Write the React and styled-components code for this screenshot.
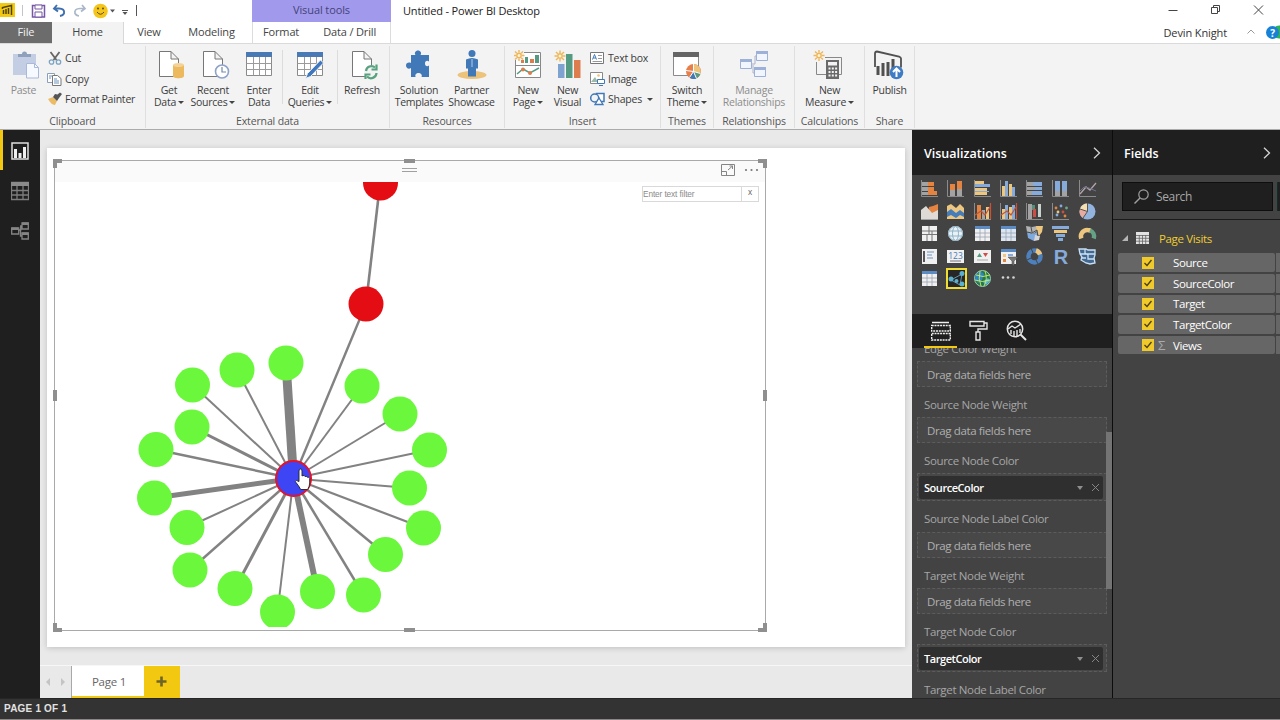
import React, { useState } from "react";
import styled, { createGlobalStyle, css } from "styled-components";

const GlobalStyle = createGlobalStyle`
  * {
    box-sizing: border-box;
  }
  body {
    margin: 0;
    overflow: hidden;
    font-family: "Open Sans", "Noto Sans", sans-serif;
    font-size: 11px;
    color: #444;
  }
  svg {
    display: block;
    flex-shrink: 0;
  }
`;

const Window = styled.div`
  width: 1280px;
  height: 720px;
  display: flex;
  flex-direction: column;
  background: #fff;
`;

/* ---------- title bar + tabs ---------- */

const TopBar = styled.header`
  height: 43px;
  display: flex;
  background: #fff;
`;

const TopLeft = styled.div`
  width: 252px;
  display: flex;
  flex-direction: column;
`;

const QuickAccess = styled.div`
  height: 22px;
  display: flex;
  align-items: center;
`;

const Tabs = styled.nav`
  height: 21px;
  display: flex;
`;

const Tab = styled.div`
  width: ${(props) => props.$width}px;
  height: ${(props) => (props.$active ? 22 : 21)}px;
  line-height: 20px;
  text-align: center;
  font-size: 11px;
  letter-spacing: -0.15px;
  color: #444;
  ${(props) =>
    props.$file &&
    css`
      background: #6c6c6c;
      color: #f2f2f2;
    `}
  ${(props) =>
    props.$active &&
    css`
      background: #f3f3f3;
      border-right: 1px solid #d8d8d8;
      z-index: 1;
    `}
`;

const ToolTabs = styled.div`
  width: 139px;
  border-right: 1px solid #dcdcdc;
  border-left: 1px solid #dcdcdc;
`;

const ToolTitle = styled.div`
  height: 22px;
  margin: 0 -1px;
  background: #a19aec;
  text-align: center;
  line-height: 19px;
  color: #45427a;
  letter-spacing: -0.1px;
`;

const TitleArea = styled.div`
  flex: 1;
  display: flex;
  flex-direction: column;
`;

const TitleRow = styled.div`
  height: 22px;
  display: flex;
  justify-content: space-between;
  padding-left: 12px;
  line-height: 22px;
  color: #222;
  letter-spacing: -0.16px;
`;

const AccountRow = styled.div`
  height: 21px;
  display: flex;
  justify-content: flex-end;
  align-items: center;
  padding-bottom: 1px;
  color: #333;
  letter-spacing: -0.12px;
`;

/* ---------- ribbon ---------- */

const Ribbon = styled.div`
  height: 87px;
  display: flex;
  background: #f3f3f3;
  border-top: 1px solid #dadada;
  border-bottom: 1px solid #ababab;
`;

const Group = styled.section`
  width: ${(props) => props.$width}px;
  height: 82px;
  margin-top: 2px;
  display: flex;
  flex-direction: column;
  border-right: 1px solid #dfdfdf;
`;

const GroupBody = styled.div`
  height: 67px;
  display: flex;
  padding-left: ${(props) => props.$pad || 0}px;
  justify-content: ${(props) => (props.$center ? "center" : "flex-start")};
`;

const GroupLabel = styled.div`
  height: 15px;
  line-height: 17px;
  text-align: center;
  font-size: 10.5px;
  letter-spacing: -0.15px;
  color: #555;
  white-space: nowrap;
`;

const BigButton = styled.div`
  width: ${(props) => props.$width}px;
  flex-shrink: 0;
  display: flex;
  flex-direction: column;
  align-items: center;
  padding-top: 4px;
  color: ${(props) => (props.$disabled ? "#8c8c8c" : "#3c3c3c")};
`;

const ButtonText = styled.div`
  margin-top: 4px;
  font-size: 10.5px;
  line-height: 12px;
  letter-spacing: -0.25px;
  text-align: center;
  white-space: nowrap;
`;

const Line = styled.div`
  display: flex;
  justify-content: center;
  align-items: center;
`;

const Caret = styled.i`
  margin-left: 2px;
  border: 3px solid transparent;
  border-top: 3px solid #444;
  border-bottom: 0;
`;

const SmallButtons = styled.div`
  display: flex;
  flex-direction: column;
  padding: 2px 0 0 ${(props) => props.$pad || 0}px;
`;

const SmallButton = styled.div`
  height: 20.6px;
  display: flex;
  align-items: center;
  gap: 3px;
  font-size: 10.5px;
  letter-spacing: -0.22px;
  color: #3c3c3c;
  white-space: nowrap;
`;

const SmallIcon = styled.span`
  width: 15px;
  display: flex;
  justify-content: center;
`;

const InnerRule = styled.div`
  width: 1px;
  height: 54px;
  margin-top: 4px;
  background: #dcdcdc;
`;

/* ---------- body ---------- */

const Body = styled.div`
  height: 568px;
  display: flex;
`;

const ViewRail = styled.aside`
  width: 40px;
  background: #1f1f1f;
  display: flex;
  flex-direction: column;
`;

const RailItem = styled.div`
  height: 40px;
  display: flex;
  align-items: center;
  padding-top: 2px;
  padding-left: ${(props) => (props.$active ? 8 : 11)}px;
  border-left: ${(props) => (props.$active ? "3px solid #f2c811" : "0")};
`;

const Workspace = styled.main`
  width: 872px;
  background: #e9e9e9;
  display: flex;
  flex-direction: column;
`;

const CanvasWrap = styled.div`
  height: 535px;
  padding: 18px 7px 0;
`;

const Page = styled.div`
  height: 499px;
  background: #fff;
  padding: 12px 0 0 7px;
  box-shadow: 0 1px 6px rgba(0, 0, 0, 0.18);
`;

const VisualFrame = styled.div`
  position: relative;
  width: 712px;
  height: 471px;
  border: 1px solid #a9a9a9;
`;

const VisualHeader = styled.div`
  height: 21px;
  background: #fafafa;
  display: flex;
  align-items: center;
  justify-content: flex-end;
  gap: 9px;
  padding: 0 5px 3px 0;
`;

const Grip = styled.div`
  width: 15px;
  height: 4px;
  margin-right: 295px;
  border-top: 1px solid #a0a0a0;
  border-bottom: 1px solid #a0a0a0;
`;

const Handle = styled.span`
  position: absolute;
  ${(props) => props.$v}: -2px;
  ${(props) => props.$h}: -2px;
  width: 9px;
  height: 9px;
  border: 0 solid #8f8f8f;
  border-${(props) => props.$v}-width: 4px;
  border-${(props) => props.$h}-width: 4px;
`;

const EdgeHandle = styled.span`
  position: absolute;
  background: #8f8f8f;
  ${(props) =>
    props.$v
      ? css`
          ${props.$v}: -2px;
          left: 349px;
          width: 11px;
          height: 4px;
        `
      : css`
          ${props.$h}: -2px;
          top: 229px;
          width: 4px;
          height: 11px;
        `}
`;

const FilterBox = styled.div`
  position: absolute;
  top: 25px;
  left: 587px;
  width: 117px;
  height: 16px;
  display: flex;
  border: 1px solid #d9d9d9;
  background: #fff;
  font: 8.3px/14px "Liberation Sans", Arial, sans-serif;
  color: #8a8a8a;
  letter-spacing: -0.12px;
`;

const FilterText = styled.div`
  flex: 1;
`;

const FilterClear = styled.div`
  width: 17px;
  border-left: 1px solid #d9d9d9;
  text-align: center;
  line-height: 10px;
  color: #666;
`;

const PageTabs = styled.div`
  height: 33px;
  display: flex;
  border-top: 1px solid #f7f7f7;
`;

const PageArrows = styled.div`
  width: 32px;
  display: flex;
  align-items: center;
  justify-content: center;
  gap: 11px;
  border-right: 1px solid #a8a8a8;
`;

const Arrow = styled.i`
  border: 4px solid transparent;
  ${(props) =>
    props.$left
      ? "border-right-color: #c4c4c4; border-left: 0;"
      : "border-left-color: #c4c4c4; border-right: 0;"}
`;

const PageTab = styled.div`
  width: 72px;
  background: #fff;
  border-bottom: 2px solid #f2c811;
  text-align: center;
  line-height: 31px;
  padding-left: 2px;
  font-size: 11.5px;
  letter-spacing: -0.25px;
  color: #666;
`;

const AddPage = styled.div`
  width: 36px;
  background: #f2c811;
  display: flex;
  align-items: center;
  justify-content: center;
  padding: 0 1px 2px 0;
`;

/* ---------- right panes ---------- */

const Pane = styled.aside`
  width: ${(props) => props.$width}px;
  display: flex;
  flex-direction: column;
  background: #434343;
  border-right: ${(props) => (props.$rule ? "1px solid #0c0c0c" : "0")};
  overflow: hidden;
`;

const PaneHeader = styled.div`
  height: 45px;
  flex-shrink: 0;
  display: flex;
  align-items: center;
  justify-content: space-between;
  padding: 1px ${(props) => props.$right}px 0 ${(props) => props.$left}px;
  background: #1f1f1f;
  color: #fff;
  font-size: 12.5px;
  font-weight: 600;
  letter-spacing: 0;
`;

const VisualGrid = styled.div`
  height: 139px;
  flex-shrink: 0;
  padding: 5px 0 0 9px;
  display: grid;
  grid-template-columns: repeat(7, 26.3px);
  grid-auto-rows: 22.5px;
`;

const VisualCell = styled.div`
  display: flex;

  svg {
    overflow: visible;
  }
  ${(props) =>
    props.$selected &&
    css`
      width: 21px;
      height: 21px;
      margin: -2px 0 0 -1px;
      border: 2px solid #f0dc32;
      background: #262626;
    `}
`;

const Modes = styled.div`
  height: 34px;
  flex-shrink: 0;
  display: flex;
  padding-left: 12px;
  background: #1f1f1f;
`;

const Mode = styled.div`
  width: ${(props) => props.$width}px;
  height: 34px;
  display: flex;
  justify-content: center;
  align-items: center;
  padding-top: 1px;
  border-bottom: 2px solid ${(props) => (props.$active ? "#f2c811" : "transparent")};
`;

const Wells = styled.div`
  flex: 1;
  min-height: 0;
  display: flex;
  overflow: hidden;
`;

const WellList = styled.div`
  width: 194px;
  padding-left: 5px;
  margin-top: -17.5px;
`;

const WellLabel = styled.div`
  height: 30.3px;
  padding: 9px 0 0 7px;
  line-height: 18px;
  font-size: 11.5px;
  letter-spacing: -0.35px;
  color: #a6a6a6;
  white-space: nowrap;
`;

const WellBox = styled.div`
  width: 190px;
  height: ${(props) => (props.$filled ? 28 : 26)}px;
  border: 1px dashed #5c5c5c;
  background: #484848;
  padding: ${(props) => (props.$filled ? "2px 1px 1px 1px" : "0 0 0 9px")};
  line-height: 26px;
  font-size: 11.5px;
  letter-spacing: -0.38px;
  color: #b0b0b0;
`;

const WellField = styled.div`
  height: 23px;
  width: 184px;
  display: flex;
  align-items: center;
  padding: 0 3px 0 5px;
  background: #2f2f2f;
  border-radius: 2px;
  color: #fff;
  font-size: 11px;
  font-weight: 600;
  letter-spacing: -0.45px;
`;

const WellCaret = styled.i`
  margin-left: auto;
  margin-right: 8px;
  border: 3.5px solid transparent;
  border-top: 4px solid #8f8f8f;
  border-bottom: 0;
`;

const ScrollThumb = styled.div`
  width: 6px;
  height: 157px;
  margin-top: 84px;
  background: #747474;
`;

const SearchRow = styled.div`
  height: 45px;
  padding: 7px 0 0 9px;
  display: flex;
  gap: 4px;
  border-bottom: 1px solid #1a1a1a;
`;

const SearchBox = styled.div`
  width: 151px;
  height: 29px;
  display: flex;
  align-items: center;
  gap: 7px;
  padding-left: 11px;
  background: #1f1f1f;
  border: 1px solid #0e0e0e;
  color: #a8a8a8;
  font-size: 12px;
  letter-spacing: -0.35px;
`;

const SearchSide = styled.div`
  flex: 1;
  height: 29px;
  background: #1f1f1f;
  border-left: 1px solid #0e2e2e;
`;

const TableRow = styled.div`
  height: 33.4px;
  padding: 3px 0 0 9px;
  display: flex;
  align-items: center;
  color: #f0cd31;
  font-size: 11.5px;
  letter-spacing: -0.35px;
`;

const TableName = styled.span`
  margin-left: 10px;
`;

const Twisty = styled.i`
  margin-right: 8px;
  border-left: 6px solid transparent;
  border-bottom: 6px solid #b5b5b5;
`;

const FieldRow = styled.div`
  height: 18.6px;
  margin: 0 0 2px 5px;
  display: flex;
  gap: 1px;
`;

const FieldMain = styled.div`
  width: 157px;
  display: flex;
  align-items: center;
  padding-left: 24px;
  background: #666;
  border-radius: 2px;
  color: #fff;
  font-size: 11.5px;
  letter-spacing: -0.42px;
`;

const FieldTail = styled.div`
  flex: 1;
  background: #666;
`;

const Check = styled.button`
  width: 12px;
  height: 12px;
  padding: 1px;
  border: 0;
  background: ${(props) => (props.$on ? "#f0c92a" : "#555")};
`;

const Sigma = styled.span`
  width: 19px;
  padding-left: 4px;
  font-size: 13px;
  color: #aaa;
`;

const StatusBar = styled.footer`
  height: 22px;
  padding-left: 4px;
  background: #333;
  border-top: 1px solid #262626;
  border-bottom: 1px solid #8c8686;
  font: bold 10px/19px "Liberation Sans", Arial, sans-serif;
  color: #e2e2e2;
  letter-spacing: 0.2px;
`;

/* ---------- ribbon icons ---------- */

const Doc = () => (
  <path d="M1.500 1.500H13L20.500 9V26.500H1.500zM13 1.500V9h7.500" fill="#fff" stroke="#777" />
);

const Sun = ({ x = 7, y = 7 }) => (
  <g stroke="#eeb65a" strokeWidth="1.400" transform={`translate(${x} ${y})`}>
    <path d="M0-5.500V-3M0 5.500V3M-5.500 0H-3M5.500 0H3M-4-4l1.800 1.800M4 4L2.200 2.200M-4 4l1.800-1.800M4-4L2.200-2.200" />
    <circle r="2.200" fill="#fff3d8" />
  </g>
);

const icons = {
  paste: (
    <svg width="32" height="30" viewBox="-4 0 32 30">
      <path d="M1 4h23v21H1z" fill="#c3cde3" />
      <path d="M6 7V4h4a2.500 2.500 0 015 0h4v3z" fill="#8fa0bd" />
      <path d="M14.500 13.500h8l4 4V28h-12z" fill="#f6f9ff" stroke="#a9b9da" />
      <path d="M22.500 13.500v4h4" fill="none" stroke="#a9b9da" />
    </svg>
  ),
  getData: (
    <svg width="33" height="30" viewBox="-5 0 33 30">
      <Doc />
      <path d="M15 15v11c0 3 11 3 11 0V15z" fill="#ecb95f" />
      <ellipse cx="20.500" cy="15" rx="5.500" ry="2" fill="#f4d296" />
    </svg>
  ),
  recent: (
    <svg width="33" height="30" viewBox="-5 0 33 30">
      <Doc />
      <circle cx="20" cy="21.500" r="6.500" fill="#fff" stroke="#8da3c8" strokeWidth="1.600" />
      <path d="M20 17v5h4" fill="none" stroke="#7488ad" strokeWidth="1.200" />
    </svg>
  ),
  table: (
    <svg width="28" height="30" viewBox="0 0 28 30">
      <path d="M1.500 3.500h25v22h-25z" fill="#fff" stroke="#8a8a8a" />
      <path d="M1 2h26v5H1z" fill="#4a7ab5" />
      <path d="M1.500 13.500h25M1.500 19.500h25M8.500 7v18.500M14.500 7v18.500M20.500 7v18.500" stroke="#9b9b9b" />
    </svg>
  ),
  edit: (
    <svg width="28" height="30" viewBox="0 0 28 30">
      <path d="M1.500 3.500h25v22h-25z" fill="#fff" stroke="#8a8a8a" />
      <path d="M1 2h26v5H1z" fill="#4a7ab5" />
      <path d="M1.500 13.500h25M1.500 19.500h25M8.500 7v18.500M14.500 7v18.500M20.500 7v18.500" stroke="#9b9b9b" />
      <path d="M24.500 10l3 3-13 13.500-5 2 2-5z" fill="#3f78bf" stroke="#f3f3f3" />
    </svg>
  ),
  refresh: (
    <svg width="33" height="30" viewBox="-5 0 33 30">
      <Doc />
      <circle cx="20" cy="22" r="7" fill="#f3f3f3" />
      <g fill="none" stroke="#57a27f" strokeWidth="2.200">
        <path d="M15 21a5.500 5.500 0 019-3.500M25.500 23a5.500 5.500 0 01-9.500 3.500" />
        <path d="M25.500 14.500v5h-5M14.500 29v-4.500h5" />
      </g>
    </svg>
  ),
  puzzle: (
    <svg width="28" height="30" viewBox="0 0 28 30">
      <path
        d="M6 5h4.500c-1.500-2 0-4.500 2.500-4.500s4 2.500 2.500 4.500H24v6.500c-2-1.500-4-.5-4 2s2 3.500 4 2V27h-7.500c1.200-2-.8-4-3-4s-4 2-2.800 4H6v-9c-2 1.500-5 .5-5-2.500S4 12 6 13z"
        fill="#4178b8"
      />
    </svg>
  ),
  partner: (
    <svg width="30" height="30" viewBox="0 0 30 30">
      <ellipse cx="15" cy="25" rx="14.500" ry="4" fill="#edc27b" />
      <circle cx="15" cy="3.500" r="3.500" fill="#4178b8" />
      <path d="M9 9.500q6-3 12 0v9h-2v8h-8v-8H9z" fill="#4178b8" />
      <path d="M15 9v8" stroke="#b7cbe5" />
    </svg>
  ),
  newPage: (
    <svg width="28" height="30" viewBox="0 0 28 30">
      <path d="M1.500 2.500h25v25h-25z" fill="#fff" stroke="#888" />
      <path d="M1.500 15.500h25" stroke="#888" />
      <path d="M7 10h3v3H7zM16 9h4v4h-4z" fill="#dd7d4d" />
      <path d="M11 7h3v6h-3zM21 5h4v8h-4z" fill="#559b82" />
      <path d="M3 24l6-5 7 4 9-5" fill="none" stroke="#559b82" strokeWidth="1.500" />
      <g fill="#dd7d4d">
        <circle cx="9" cy="19.500" r="2" />
        <circle cx="16" cy="23" r="2" />
      </g>
      <path d="M0 0h10v10H0z" fill="#f3f3f3" />
      <Sun x={5} y={5.500} />
    </svg>
  ),
  newVisual: (
    <svg width="28" height="30" viewBox="0 0 28 30">
      <path d="M4 14h6.500v14H4z" fill="#7ea3d0" />
      <path d="M12 4h6.500v24H12z" fill="#559b82" />
      <path d="M20 10h6.500v18H20z" fill="#dd7d4d" />
      <Sun x={6} y={6} />
    </svg>
  ),
  theme: (
    <svg width="30" height="30" viewBox="0 0 30 30">
      <path d="M1.500 3.500h25v22h-25z" fill="#fff" stroke="#8a8a8a" />
      <path d="M1 2h26v5H1z" fill="#666" />
      <g transform="translate(21.500 21.500)">
        <circle r="7.500" fill="#e77f4a" />
        <path d="M0 0V-7.500A7.500 7.500 0 017 2z" fill="#edc27b" />
        <path d="M0 0l7 2a7.500 7.500 0 01-4 5z" fill="#559b82" />
        <path d="M0 0l3 7a7.500 7.500 0 01-7-1z" fill="#4178b8" />
        <path d="M0 0V-7.500M0 0l7 2M0 0l3 7M0 0l-4 6M0 0l-7.500-1" stroke="#fff" />
      </g>
    </svg>
  ),
  relations: (
    <svg width="30" height="30" viewBox="0 0 30 30">
      <path d="M11 14h5V6h3M14 15v8h3" fill="none" stroke="#a9b4cc" />
      {[[1.500, 9.500], [17.500, 1.500], [15.500, 17.500]].map(([x, y]) => (
        <g key={x}>
          <path d={`M${x} ${y}h11v9h-11z`} fill="#f1f5fd" stroke="#9db1d8" />
          <path d={`M${x - 0.500} ${y - 0.500}h12v3h-12z`} fill="#9db1d8" />
        </g>
      ))}
    </svg>
  ),
  measure: (
    <svg width="36" height="30" viewBox="0 0 36 30">
      <path d="M4.500 12v12.500H14M13 7.500h16.500v17H27" fill="none" stroke="#888" />
      <path d="M14 10h13v19H14z" fill="#6a6a6a" />
      <path d="M16 12h9v3.500h-9z" fill="#f3f3f3" />
      <path d="M16.500 18.500h9M16.500 22h9M16.500 25.500h9" stroke="#f3f3f3" strokeWidth="2" strokeDasharray="2 1.300" />
      <Sun x={7} y={5.500} />
    </svg>
  ),
  publish: (
    <svg width="33" height="30" viewBox="0 0 33 30">
      <path d="M2 17V3.500q0-2 2-2l22 5q2 1 2 2v9" fill="none" stroke="#505050" strokeWidth="1.800" />
      <path d="M5 16v9M10 13v13M15 12v14M20 9v10" stroke="#505050" strokeWidth="3" />
      <circle cx="23.500" cy="22.500" r="6.800" fill="#3f7cc4" />
      <path d="M23.500 27v-8M20 22l3.500-3.500L27 22" fill="none" stroke="#fff" strokeWidth="2" />
    </svg>
  ),
};

const smallIcons = {
  cut: (
    <svg width="14" height="14" viewBox="0 0 14 14">
      <path d="M2.500 1l6 8M11.500 1l-6 8" stroke="#666" strokeWidth="1.800" />
      <g fill="none" stroke="#7da3c5" strokeWidth="1.300">
        <circle cx="3.500" cy="11" r="2.200" />
        <circle cx="10.500" cy="11" r="2.200" />
      </g>
    </svg>
  ),
  copy: (
    <svg width="15" height="14" viewBox="0 0 15 14">
      <path d="M.5 1.500h7v9h-7z" fill="#fff" stroke="#8aa0b8" />
      <path d="M5.500 3.500h5l3.500 3v7H5.500z" fill="#fff" stroke="#777" />
      <path d="M2 4h3M2 6h2M7 7h3M7 9h5M7 11h5" stroke="#6d91bd" />
    </svg>
  ),
  painter: (
    <svg width="14" height="14" viewBox="0 0 14 14">
      <path d="M0 7l5-2 4 4-2 4C4 13 2 10 0 7z" fill="#ebbb66" />
      <path d="M5 5l4 4 2-3 3-4-2-1.500-2.500 2L7 2z" fill="#555" />
    </svg>
  ),
  textBox: (
    <svg width="15" height="14" viewBox="0 0 15 14">
      <path d="M.5 1.500h13v11H.5z" fill="#fff" stroke="#777" />
      <path d="M2.500 8.500L4.500 3.500l2 5M3.300 7h2.500" fill="none" stroke="#4178b8" />
      <path d="M8 4.500h4M8 7.500h4M2.500 10.500h9.500" stroke="#999" />
    </svg>
  ),
  image: (
    <svg width="15" height="15" viewBox="0 0 15 15">
      <path d="M.5 1.500h12v11H.5z" fill="#fff" stroke="#888" />
      <circle cx="8.500" cy="4.500" r="1.300" fill="#edc27b" />
      <path d="M1 11l4-5 3 5z" fill="#9ab9a8" />
      <path d="M7.500 8.500h7v4h-7zM9 14.500h4" fill="#fff" stroke="#4178b8" />
    </svg>
  ),
  shapes: (
    <svg width="15" height="14" viewBox="0 0 15 14">
      <path d="M6.500 1.500h7.500v8H6.500z" fill="#fff" stroke="#4178b8" strokeWidth="1.500" />
      <circle cx="4.700" cy="6" r="4" fill="#f3f3f3" stroke="#4178b8" strokeWidth="1.500" />
      <path d="M9 6l4 6.500H5z" fill="#fff" stroke="#4178b8" strokeWidth="1.300" />
    </svg>
  ),
};

/* ---------- visualization icons, drawn on an 18x17 grid ---------- */

const O = "#e58441";
const B = "#86abdb";
const Y = "#edc680";
const G = "#a3a3a3";
const W = "#f0f0f0";

const Axes = () => <path d="M.5 0v16.500H17" fill="none" stroke="#8b8b8b" />;

const Rects = ({ items }) =>
  items.map(([x, y, w, h, fill], i) => (
    <rect key={i} x={x} y={y} width={w} height={h} fill={fill} />
  ));

const Grid = ({ tint = W }) => (
  <>
    <path d="M1 1h15v15H1z" fill={tint} />
    <path d="M1 1h15v3H1z" fill="#5a8bc5" />
    <path d="M1 8h15M1 12h15M6 4v12M11 4v12" stroke="#9aa3b2" strokeWidth=".8" />
  </>
);

const visuals = [
  <><Axes /><Rects items={[[1, 2, 6, 4, G], [7, 2, 6, 4, O], [1, 7, 6, 4, G], [7, 7, 6, 4, O], [1, 12, 7, 3, G], [7, 11, 9, 4, O]]} /></>,
  <><Axes /><Rects items={[[3, 4, 5, 6, O], [3, 10, 5, 6, G], [10, 1, 5, 8, O], [10, 9, 5, 7, G]]} /></>,
  <><Axes /><Rects items={[[1, 1, 9, 3, Y], [1, 4, 15, 3, B], [1, 8, 12, 3, Y], [1, 12, 12, 3, Y], [1, 11, 14, 1, B]]} /></>,
  <><Axes /><Rects items={[[2, 6, 3, 10, Y], [5, 1, 3, 15, B], [9, 4, 3, 12, Y], [12, 7, 3, 9, B]]} /></>,
  <><Axes /><Rects items={[[1, 2, 6, 4, G], [7, 2, 9, 4, B], [1, 7, 9, 3, G], [9, 7, 7, 3, B], [1, 11, 5, 4, G], [6, 11, 10, 4, B]]} /></>,
  <><Axes /><Rects items={[[3, 1, 5, 10, B], [3, 11, 5, 5, G], [10, 1, 5, 10, B], [10, 11, 5, 5, G]]} /></>,
  <><Axes /><path d="M1 14L7 7l4 3 6-7" fill="none" stroke="#b5a2aa" strokeWidth="1.300" /><path d="M1 11l4-4 5 1 7 3" fill="none" stroke="#6d7190" /></>,
  <><path d="M8 4l4-1 5-2v15H6z" fill={O} /><path d="M0 7l5-4 6 7 6-3v9H0z" fill="#dedbd6" /><path d="M0 16.500h17" stroke={G} /></>,
  <><path d="M0 3l4-2 5 4 4-4 4 4v11H0z" fill={Y} /><path d="M0 9l4-3 5 4 4-3 4 3v4l-4-2-4 3-5-3-4 2z" fill="#477cba" /></>,
  <><Axes /><Rects items={[[3, 2, 4, 14, O], [8, 7, 3, 9, G], [12, 4, 3, 12, Y]]} /><path d="M1 12l6-4 4 4 5-8M16.500 0v16" fill="none" stroke="#c65337" strokeWidth="1.200" /></>,
  <><Axes /><Rects items={[[2, 6, 3, 10, Y], [5, 2, 3, 14, B], [9, 4, 3, 12, Y], [12, 2, 3, 14, B]]} /><path d="M1 12l6-4 4 4 5-8M16.500 0v16" fill="none" stroke="#c65337" strokeWidth="1.200" /></>,
  <><Axes /><Rects items={[[2, 1, 4, 15, G], [6, 2, 3, 5, "#50917d"], [7, 6, 3, 8, "#cf4d44"], [12, 1, 3, 13, "#c9d4cf"]]} /></>,
  <><Axes />{[[4, 5, O], [9, 3, B], [14.500, 5, "#6fa889"], [6, 9, Y], [11, 9, "#cf4d44"], [5, 12, B], [13, 13, O]].map(([x, y, c]) => <circle key={x} cx={x} cy={y} r="1.400" fill={c} />)}</>,
  <><circle cx="8.500" cy="8.500" r="8" fill="#93b4df" /><path d="M8.500 8.500V.5A8 8 0 001 6z" fill="#f5deb0" /><path d="M8.500 8.500L1 6a8 8 0 003 9z" fill="#e7aba0" /><path d="M8.500 0v8.500L1 6M8.500 8.500L4 15" fill="none" stroke="#555" /></>,
  <><path d="M1 1h15v15H1z" fill={W} /><path d="M1 6h15M8 1v8M1 9.500h15M6 10v6M11 6v10" stroke="#777" /></>,
  <><circle cx="8.500" cy="8.500" r="7.500" fill="#e9f1f6" /><g fill="none" stroke="#8fb2c6"><circle cx="8.500" cy="8.500" r="7" /><ellipse cx="8.500" cy="8.500" rx="3" ry="7" /><path d="M2 6h13M2 11h13" /></g></>,
  <Grid />,
  <Grid tint="#dde5f1" />,
  <><path d="M0 1l6 1 5-1v5l-4 3-6-2z" fill="#b3b3b3" /><path d="M10 1h7l-1 6-3 4-2-3z" fill={Y} /><path d="M1 7l6 2 4-2 1 5-4 4-6-3z" fill="#7ea9df" /><path d="M9 10l5 1-1 4-5 1z" fill="#d7d7d7" /><path d="M1 7l5 1 5-3 1 6M5 2l1 5" fill="none" stroke="#333" strokeWidth=".8" /></>,
  <Rects items={[[0, 1, 17, 3, B], [2, 5, 13, 3, Y], [4, 9, 9, 3, B], [6, 13, 5, 3, B]]} />,
  <g fill="none" strokeWidth="4.500"><path d="M2.300 13.500A6.300 6.300 0 018.500 5q2 0 3.500 1" stroke={Y} /><path d="M11 5.500a6.300 6.300 0 013.700 8" stroke="#65a184" /></g>,
  <><path d="M1 1h15v15H1z" fill={W} /><path d="M3 3v11" stroke="#555" strokeWidth="2" /><path d="M6 4h7M6 7h5M6 10h6" stroke="#6f95c0" /></>,
  <><path d="M0 2h17v13H0z" fill={W} /><text x="8.500" y="10.500" fontSize="8.500" textAnchor="middle" fill="#477cba">123</text><path d="M3 13h11" stroke="#777" /></>,
  <><path d="M0 2h17v13H0z" fill={W} /><path d="M3 9l2.500-4L8 9z" fill="#559b82" /><path d="M9 5h5l-2.500 4z" fill="#cf4d44" /><path d="M3 12h11" stroke="#aaa" /></>,
  <><path d="M1 1h15v15H1z" fill={W} /><path d="M1 1h15v3H1z" fill="#5a8bc5" /><Rects items={[[3, 6, 3, 3, Y], [3, 11, 3, 3, O], [8, 6, 5, 2, B]]} /><path d="M8 9h10l-4 4v5l-2-2v-3z" fill="#777" stroke="#444" strokeWidth=".5" /></>,
  <><circle cx="8.500" cy="8.500" r="6" fill="none" stroke="#4d80bd" strokeWidth="4.500" /><path d="M10 2.500a6 6 0 014 4" fill="none" stroke={Y} strokeWidth="4.500" /><path d="M5 0l2 5M1 12l4-2M12 16l-2-4" stroke="#434343" /></>,
  <text x="9" y="15.500" fontFamily="Liberation Sans" fontSize="20" fontWeight="700" textAnchor="middle" fill="#86abdb">R</text>,
  <><path d="M0 1l16 1v5l-1 8-8 1-5-4z" fill="#44688f" /><path d="M0 1h7l2 1h7v5l-1 3 1 5-5 1-4-1-5-3 1-3-2-3zM1 6h15M6 1v4l3 2v4h6M2 10h5" fill="none" stroke="#c9e1f5" strokeWidth="1.300" /></>,
  <Grid />,
  <><path d="M3 10l11-6M3 10l9 5M14 4l-2 11" stroke="#6794a8" /><g fill="#5ab0cf"><circle cx="3" cy="9" r="2.500" /><circle cx="14" cy="3.500" r="2.500" /><circle cx="8.500" cy="11" r="2" /><circle cx="14" cy="14" r="2.500" /></g></>,
  <><circle cx="8.500" cy="8.500" r="8" fill="#27774c" stroke="#9dd0b1" /><path d="M2 4q5-4 8 0l-2 6-4 3-3-4z" fill="#2f86c2" /><path d="M9 12l5-4 2 3-4 4z" fill="#58b6e2" /><path d="M2 5q7 3 14 0M1 10q7 3 15 0M6 1q-2 8 1 15M11 1q3 8-1 15" fill="none" stroke="#c9ee62" strokeWidth=".9" /></>,
  <g fill="#d5d5d5"><circle cx="3" cy="7.500" r="1.300" /><circle cx="8" cy="7.500" r="1.300" /><circle cx="13.500" cy="7.500" r="1.300" /></g>,
];

/* ---------- network graph ---------- */

const HUB = { x: 293.5, y: 478.5 };

const leaves = [
  [286, 363, 9],
  [237, 370, 2],
  [192.5, 385, 2],
  [192, 427, 3],
  [156, 449.5, 2.5],
  [154.5, 498, 5],
  [187, 527.5, 2],
  [190, 570, 2.5],
  [235, 588.5, 3],
  [277.5, 612, 2],
  [317.5, 591.5, 6],
  [363.5, 595, 2.5],
  [385.5, 554.5, 2.5],
  [423.5, 528, 2.2],
  [409.5, 488, 2],
  [429.5, 450, 2],
  [400, 414, 2],
  [362, 386, 2],
];

function NetworkGraph() {
  return (
    <svg width="710" height="445" viewBox="55 182 710 445">
      <g stroke="#828282">
        {leaves.map(([x, y, w]) => (
          <line key={x} x1={HUB.x} y1={HUB.y} x2={x} y2={y} strokeWidth={w} />
        ))}
        <line x1={HUB.x} y1={HUB.y} x2="366" y2="304" strokeWidth="2.400" />
        <line x1="366" y1="304" x2="380" y2="184" strokeWidth="2.600" />
      </g>
      {leaves.map(([x, y]) => (
        <circle key={x} cx={x} cy={y} r="17.500" fill="#6bf73c" />
      ))}
      <circle cx="366" cy="304" r="17.500" fill="#e50d14" />
      <circle cx="380.500" cy="183" r="17.500" fill="#e50d14" />
      <circle cx={HUB.x} cy={HUB.y} r="17.500" fill="#3d45f5" stroke="#e2132a" strokeWidth="2" />
      <path
        d="M299 471q0-2 1.500-2t1.500 2v5l1-.5q1.500-.3 2 1 1.500-.7 2.200.7 2-.5 2.500 1.300v4.500q0 3-2 6.500h-7q-2-4-5.500-8 .5-2 3.800 0z"
        fill="#fff"
        stroke="#222"
        strokeWidth=".9"
      />
    </svg>
  );
}

const Chevron = () => (
  <svg width="8" height="12" viewBox="0 0 8 12">
    <path d="M1 .7L6.500 6 1 11.300" fill="none" stroke="#d5d5d5" strokeWidth="1.300" />
  </svg>
);

function RibbonButton({ icon, lines, width, caret, disabled }) {
  return (
    <BigButton $width={width} $disabled={disabled}>
      {icons[icon]}
      <ButtonText>
        {lines.map((line, i) => (
          <Line key={line}>
            {line}
            {caret && i === lines.length - 1 && <Caret />}
          </Line>
        ))}
      </ButtonText>
    </BigButton>
  );
}

function SmallRibbonButton({ icon, text, caret }) {
  return (
    <SmallButton>
      <SmallIcon>{smallIcons[icon]}</SmallIcon>
      {text}
      {caret && <Caret />}
    </SmallButton>
  );
}

function Header() {
  return (
    <TopBar>
      <TopLeft>
        <QuickAccess>
          <svg width="140" height="22" viewBox="0 0 140 22">
            <path d="M0 3h15v14H0z" fill="#f2c811" />
            <path d="M2.500 9V7.500L11.500 5.500v9.500M3.500 10v4M6 9v5M8.500 8v6" fill="none" stroke="#4c430f" strokeWidth="1.500" />
            <path d="M22.500 5v11" stroke="#c4c4c4" />
            <path d="M32.500 5.500h12v11.500h-12z" fill="#fff" stroke="#7656a5" strokeWidth="1.500" />
            <path d="M35 5h7v4h-7zM35 12h7v5h-7z" fill="#fff" stroke="#7656a5" />
            <path d="M57 5l-3 3.500 4 3M54 8.500h5q6 0 5 5-1 2-4 2.500" fill="none" stroke="#3e6fae" strokeWidth="1.900" />
            <path d="M82 5l3 3.500-4 3M85 8.500h-5q-6 0-5 5 1 2 4 2.500" fill="none" stroke="#aab7c9" strokeWidth="1.700" />
            <circle cx="100.500" cy="11" r="7.300" fill="#f4c51c" />
            <path d="M97 12q3.500 4.500 7 0" fill="none" stroke="#5f4d10" />
            <circle cx="98" cy="8.500" r="1" fill="#5f4d10" />
            <circle cx="103" cy="8.500" r="1" fill="#5f4d10" />
            <path d="M110 9.500h5l-2.500 3zM122.500 12h5l-2.500 3z" fill="#555" />
            <path d="M122 10.500h6M136.500 5v11" stroke="#555" />
          </svg>
        </QuickAccess>
        <Tabs>
          <Tab $file $width={52}>File</Tab>
          <Tab $active $width={72}>Home</Tab>
          <Tab $width={50}>View</Tab>
          <Tab $width={75}>Modeling</Tab>
        </Tabs>
      </TopLeft>
      <ToolTabs>
        <ToolTitle>Visual tools</ToolTitle>
        <Tabs>
          <Tab $width={57}>Format</Tab>
          <Tab $width={82}>Data / Drill</Tab>
        </Tabs>
      </ToolTabs>
      <TitleArea>
        <TitleRow>
          Untitled - Power BI Desktop
          <svg width="120" height="22" viewBox="1160 0 120 22">
            <path d="M1168.500 10.500h9M1254 5.500l9 9M1263 5.500l-9 9" stroke="#444" />
            <path d="M1211.500 7.500h6v6h-6zM1213.500 7.500v-2h6v6h-2" fill="none" stroke="#444" />
          </svg>
        </TitleRow>
        <AccountRow>
          Devin Knight
          <svg width="53" height="21" viewBox="1227 22 53 21">
            <path d="M1247.500 33.500l3.500-3.500 3.500 3.500" fill="none" stroke="#999" />
            <circle cx="1279" cy="32" r="6.500" fill="#2fb457" />
            <circle cx="1272.500" cy="32.500" r="6.500" fill="#1681d6" />
            <text x="1272.500" y="36.500" fontSize="10" fontWeight="700" textAnchor="middle" fill="#fff">?</text>
          </svg>
        </AccountRow>
      </TitleArea>
    </TopBar>
  );
}

function RibbonBar() {
  return (
    <Ribbon>
      <Group $width={146}>
        <GroupBody>
          <RibbonButton icon="paste" lines={["Paste"]} width={47} disabled />
          <SmallButtons>
            <SmallRibbonButton icon="cut" text="Cut" />
            <SmallRibbonButton icon="copy" text="Copy" />
            <SmallRibbonButton icon="painter" text="Format Painter" />
          </SmallButtons>
        </GroupBody>
        <GroupLabel>Clipboard</GroupLabel>
      </Group>
      <Group $width={244}>
        <GroupBody $pad={2}>
          <RibbonButton icon="getData" lines={["Get", "Data"]} width={42} caret />
          <RibbonButton icon="recent" lines={["Recent", "Sources"]} width={46} caret />
          <RibbonButton icon="table" lines={["Enter", "Data"]} width={46} />
          <InnerRule />
          <RibbonButton icon="edit" lines={["Edit", "Queries"]} width={54} caret />
          <InnerRule />
          <RibbonButton icon="refresh" lines={["Refresh"]} width={48} />
        </GroupBody>
        <GroupLabel>External data</GroupLabel>
      </Group>
      <Group $width={115}>
        <GroupBody $pad={2}>
          <RibbonButton icon="puzzle" lines={["Solution", "Templates"]} width={54} />
          <RibbonButton icon="partner" lines={["Partner", "Showcase"]} width={51} />
        </GroupBody>
        <GroupLabel>Resources</GroupLabel>
      </Group>
      <Group $width={156}>
        <GroupBody $pad={3}>
          <RibbonButton icon="newPage" lines={["New", "Page"]} width={40} caret />
          <RibbonButton icon="newVisual" lines={["New", "Visual"]} width={39} />
          <SmallButtons $pad={3}>
            <SmallRibbonButton icon="textBox" text="Text box" />
            <SmallRibbonButton icon="image" text="Image" />
            <SmallRibbonButton icon="shapes" text="Shapes" caret />
          </SmallButtons>
        </GroupBody>
        <GroupLabel>Insert</GroupLabel>
      </Group>
      <Group $width={53}>
        <GroupBody $center>
          <RibbonButton icon="theme" lines={["Switch", "Theme"]} width={52} caret />
        </GroupBody>
        <GroupLabel>Themes</GroupLabel>
      </Group>
      <Group $width={81}>
        <GroupBody $center>
          <RibbonButton icon="relations" lines={["Manage", "Relationships"]} width={80} disabled />
        </GroupBody>
        <GroupLabel>Relationships</GroupLabel>
      </Group>
      <Group $width={70}>
        <GroupBody $center>
          <RibbonButton icon="measure" lines={["New", "Measure"]} width={68} caret />
        </GroupBody>
        <GroupLabel>Calculations</GroupLabel>
      </Group>
      <Group $width={50}>
        <GroupBody $center>
          <RibbonButton icon="publish" lines={["Publish"]} width={50} />
        </GroupBody>
        <GroupLabel>Share</GroupLabel>
      </Group>
    </Ribbon>
  );
}

function Rail() {
  return (
    <ViewRail>
      <RailItem $active>
        <svg width="18" height="18" viewBox="0 0 18 18">
          <path d="M1 1h16v16H1z" fill="none" stroke="#e0e0e0" strokeWidth="1.500" />
          <path d="M4.500 7v9M9 11v5M13.500 5v11" stroke="#f0f0f0" strokeWidth="3" />
        </svg>
      </RailItem>
      <RailItem>
        <svg width="18" height="20" viewBox="0 0 18 20">
          <path d="M.5 1.500h17v17H.5zM.5 9.500h17M.5 14h17M6 5v13.500M12 5v13.500" fill="none" stroke="#7d7d7d" strokeWidth="1.300" />
          <path d="M0 1h18v4H0z" fill="#8a8a8a" />
        </svg>
      </RailItem>
      <RailItem>
        <svg width="18" height="18" viewBox="0 0 18 18">
          <path d="M.7 6h7v6h-7zM11 1h6.300v6H11zM11 11h6.300v6H11zM7.700 8h2V4H11M9.500 8v6H11" fill="none" stroke="#858585" strokeWidth="1.300" />
          <path d="M.5 5.500h7V8h-7zM11 .5h6.500V3H11zM11 10.500h6.500V13H11z" fill="#858585" />
        </svg>
      </RailItem>
    </ViewRail>
  );
}

function ReportCanvas() {
  return (
    <Workspace>
      <CanvasWrap>
        <Page>
          <VisualFrame>
            <VisualHeader>
              <Grip />
              <svg width="14" height="12" viewBox="0 0 14 12">
                <path d="M.5.500h13v11H.5zM.5 7.500h5v4M7 6l4.500-4M8.500 2h3v3" fill="none" stroke="#858585" />
              </svg>
              <svg width="16" height="4" viewBox="0 0 16 4">
                <circle cx="2" cy="2" r="1.100" fill="#777" />
                <circle cx="7.500" cy="2" r="1.100" fill="#777" />
                <circle cx="13" cy="2" r="1.100" fill="#777" />
              </svg>
            </VisualHeader>
            <NetworkGraph />
            <FilterBox>
              <FilterText>Enter text filter</FilterText>
              <FilterClear>x</FilterClear>
            </FilterBox>
            <Handle $v="top" $h="left" />
            <Handle $v="top" $h="right" />
            <Handle $v="bottom" $h="left" />
            <Handle $v="bottom" $h="right" />
            <EdgeHandle $v="top" />
            <EdgeHandle $v="bottom" />
            <EdgeHandle $h="left" />
            <EdgeHandle $h="right" />
          </VisualFrame>
        </Page>
      </CanvasWrap>
      <PageTabs>
        <PageArrows>
          <Arrow $left />
          <Arrow />
        </PageArrows>
        <PageTab>Page 1</PageTab>
        <AddPage>
          <svg width="11" height="11" viewBox="0 0 11 11">
            <path d="M5.500.500v10M.5 5.500h10" stroke="#6d6427" strokeWidth="2.600" />
          </svg>
        </AddPage>
      </PageTabs>
    </Workspace>
  );
}

const wells = [
  { label: "Edge Color Weight" },
  { label: "Source Node Weight" },
  { label: "Source Node Color", field: "SourceColor" },
  { label: "Source Node Label Color" },
  { label: "Target Node Weight" },
  { label: "Target Node Color", field: "TargetColor" },
  { label: "Target Node Label Color" },
];

function VisualizationsPane() {
  return (
    <Pane $width={201} $rule>
      <PaneHeader $left={12} $right={11}>
        Visualizations <Chevron />
      </PaneHeader>
      <VisualGrid>
        {visuals.map((art, i) => (
          <VisualCell key={i} $selected={i === 29}>
            <svg width="18" height="17" viewBox="0 0 18 17">{art}</svg>
          </VisualCell>
        ))}
      </VisualGrid>
      <Modes>
        <Mode $active $width={33}>
          <svg width="20" height="20" viewBox="0 0 20 20">
            <path d="M1 1.500h17" stroke="#eee" strokeWidth="1.500" />
            <path d="M.7 4.500h18.600v5.500H.7zM.7 12.500h18.600V19H.7z" fill="none" stroke="#eee" strokeWidth="1.400" strokeDasharray="2 .8" />
          </svg>
        </Mode>
        <Mode $width={42}>
          <svg width="19" height="21" viewBox="0 0 19 21">
            <path d="M1 1.500h14v4.500H1zM15 3h3v6H9v3M7 12h4v8H7z" fill="none" stroke="#e5e5e5" strokeWidth="1.400" />
          </svg>
        </Mode>
        <Mode $width={34}>
          <svg width="21" height="21" viewBox="0 0 21 21">
            <circle cx="9" cy="9" r="7.700" fill="none" stroke="#e5e5e5" strokeWidth="1.500" />
            <path d="M2 9l4-3 3 2 6-4M5 10v4M8 11v5M11 10v6M14 9v4" fill="none" stroke="#e5e5e5" strokeWidth="1.400" />
            <path d="M14.500 14.500l5.500 5.500" stroke="#e5e5e5" strokeWidth="2" />
          </svg>
        </Mode>
      </Modes>
      <Wells>
        <WellList>
          {wells.map(({ label, field }) => (
            <div key={label}>
              <WellLabel>{label}</WellLabel>
              <WellBox $filled={!!field}>
                {field ? (
                  <WellField>
                    {field}
                    <WellCaret />
                    <svg width="9" height="9" viewBox="0 0 9 9">
                      <path d="M1 1l7 7M8 1L1 8" stroke="#858585" />
                    </svg>
                  </WellField>
                ) : (
                  "Drag data fields here"
                )}
              </WellBox>
            </div>
          ))}
        </WellList>
        <ScrollThumb />
      </Wells>
    </Pane>
  );
}

const fieldNames = ["Source", "SourceColor", "Target", "TargetColor", "Views"];

function FieldsPane() {
  const [checked, setChecked] = useState(fieldNames);

  const toggle = (name) =>
    setChecked(
      checked.includes(name) ? checked.filter((n) => n !== name) : [...checked, name]
    );

  return (
    <Pane $width={167}>
      <PaneHeader $left={11} $right={9}>
        Fields <Chevron />
      </PaneHeader>
      <SearchRow>
        <SearchBox>
          <svg width="15" height="15" viewBox="0 0 15 15">
            <circle cx="9.500" cy="5.500" r="4.700" fill="none" stroke="#a0a0a0" strokeWidth="1.200" />
            <path d="M6 9l-5.500 5.500" stroke="#a0a0a0" strokeWidth="1.400" />
          </svg>
          Search
        </SearchBox>
        <SearchSide />
      </SearchRow>
      <TableRow>
        <Twisty />
        <svg width="13" height="12" viewBox="0 0 13 12">
          <path d="M0 0h13v12H0z" fill="#e3e3e3" />
          <path d="M0 3.500h13M0 6.300h13M0 9.200h13M3.300 3v9M6.500 3v9M9.700 3v9" stroke="#666" strokeWidth=".8" />
        </svg>
        <TableName>Page Visits</TableName>
      </TableRow>
      {fieldNames.map((name) => (
        <FieldRow key={name}>
          <FieldMain>
            <Check $on={checked.includes(name)} onClick={() => toggle(name)}>
              <svg width="10" height="10" viewBox="0 0 10 10">
                <path d="M1.500 5l2.500 2.500L8.500 2" fill="none" stroke="#4a3f12" strokeWidth="1.300" />
              </svg>
            </Check>
            <Sigma>{name === "Views" ? "Σ" : ""}</Sigma>
            {name}
          </FieldMain>
          <FieldTail />
        </FieldRow>
      ))}
    </Pane>
  );
}

export default function App() {
  return (
    <Window>
      <GlobalStyle />
      <Header />
      <RibbonBar />
      <Body>
        <Rail />
        <ReportCanvas />
        <VisualizationsPane />
        <FieldsPane />
      </Body>
      <StatusBar>PAGE 1 OF 1</StatusBar>
    </Window>
  );
}
